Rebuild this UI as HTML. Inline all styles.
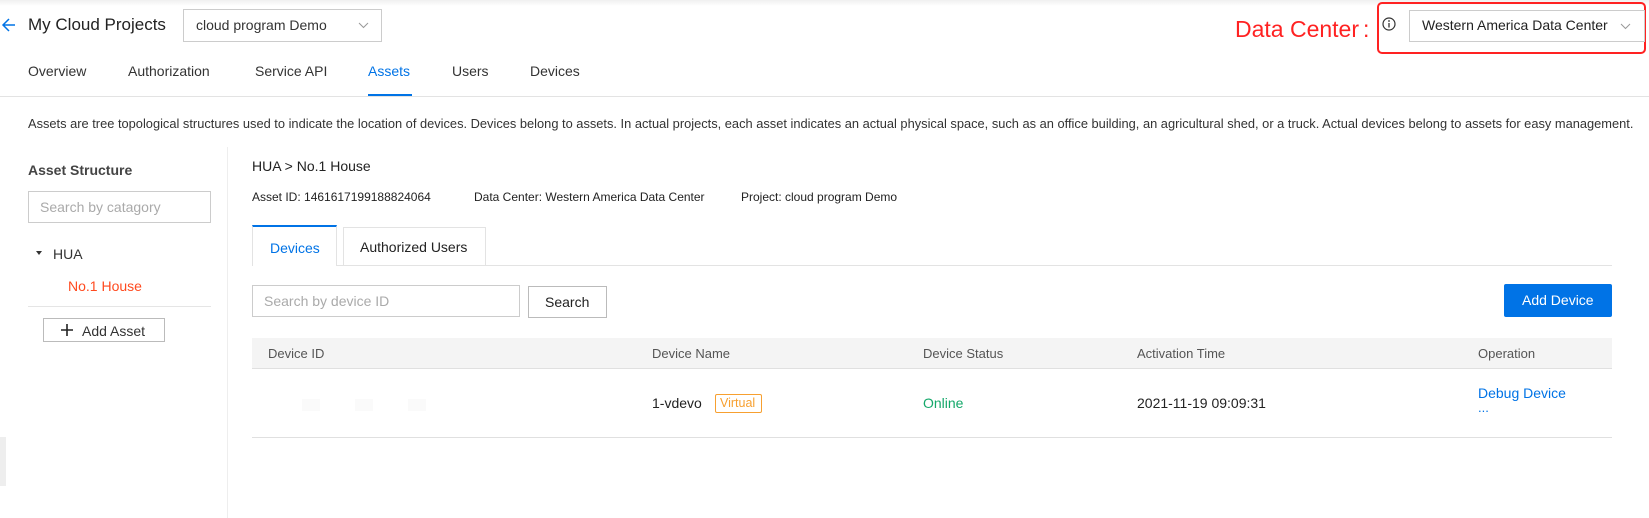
<!DOCTYPE html>
<html><head><meta charset="utf-8"><style>
*{box-sizing:border-box;margin:0;padding:0}
body{width:1649px;height:518px;overflow:hidden;background:#fff;font-family:"Liberation Sans",Arial,sans-serif;color:#333;position:relative}
.a{position:absolute;white-space:nowrap}
.box{position:absolute;border:1px solid #ccc;background:#fff}
.ph{color:#aaa}
.th{font-size:13px;color:#555;position:absolute;top:346px}
</style></head><body>
<div class="a" style="left:0;top:0;width:1649px;height:6px;background:linear-gradient(#f0f0f0,#fff)"></div>
<svg class="a" style="left:1px;top:16px" width="16" height="18" viewBox="0 0 16 18"><path d="M14 9H2M8 3L2 9l6 6" stroke="#0073e6" stroke-width="1.5" fill="none"/></svg>
<div class="a" style="left:28px;top:15px;font-size:17px;color:#222">My Cloud Projects</div>
<div class="box" style="left:183px;top:9px;width:199px;height:33px"><span class="a" style="left:12px;top:7px;font-size:14px">cloud program Demo</span><svg class="a" style="left:174px;top:12px" width="11" height="7"><path d="M1 1l4.5 4.5L10 1" stroke="#999" fill="none"/></svg></div>
<div class="a" style="left:1235px;top:16px;font-size:23px;color:#f22">Data Center<span style="margin-left:4px">:</span></div>
<div class="a" style="left:1377px;top:2px;width:269px;height:52px;border:2px solid #f22;border-radius:5px"></div>
<svg class="a" style="left:1382px;top:17px" width="14" height="14"><circle cx="7" cy="7" r="6" stroke="#333" fill="none" stroke-width="1.2"/><path d="M7 6v4.5" stroke="#333" stroke-width="1.3"/><circle cx="7" cy="4" r="0.9" fill="#333"/></svg>
<div class="box" style="left:1409px;top:10px;width:236px;height:32px"><span class="a" style="left:12px;top:6px;font-size:14px;color:#222">Western America Data Center</span><svg class="a" style="left:210px;top:12px" width="11" height="7"><path d="M1 1l4.5 4.5L10 1" stroke="#999" fill="none"/></svg></div>
<div class="a" style="left:28px;top:63px;font-size:14px">Overview</div>
<div class="a" style="left:128px;top:63px;font-size:14px">Authorization</div>
<div class="a" style="left:255px;top:63px;font-size:14px">Service API</div>
<div class="a" style="left:368px;top:63px;font-size:14px;color:#0073e6">Assets</div>
<div class="a" style="left:452px;top:63px;font-size:14px">Users</div>
<div class="a" style="left:530px;top:63px;font-size:14px">Devices</div>
<div class="a" style="left:0;top:96px;width:1649px;height:1px;background:#e3e3e3"></div>
<div class="a" style="left:368px;top:94px;width:44px;height:2px;background:#0073e6"></div>
<div class="a" style="left:28px;top:116px;font-size:12.85px;color:#333">Assets are tree topological structures used to indicate the location of devices. Devices belong to assets. In actual projects, each asset indicates an actual physical space, such as an office building, an agricultural shed, or a truck. Actual devices belong to assets for easy management.</div>
<div class="a" style="left:227px;top:147px;width:1px;height:371px;background:#eee"></div>
<div class="a" style="left:28px;top:162px;font-size:14px;font-weight:bold;color:#444">Asset Structure</div>
<div class="box" style="left:28px;top:191px;width:183px;height:32px"><span class="a ph" style="left:11px;top:7px;font-size:14px">Search by catagory</span></div>
<div class="a" style="left:36px;top:251px;width:0;height:0;border-left:3.5px solid transparent;border-right:3.5px solid transparent;border-top:4px solid #333"></div>
<div class="a" style="left:53px;top:246px;font-size:14px">HUA</div>
<div class="a" style="left:68px;top:278px;font-size:14px;color:#ff4a1f">No.1 House</div>
<div class="a" style="left:28px;top:306px;width:183px;height:1px;background:#e5e5e5"></div>
<div class="box" style="left:43px;top:318px;width:122px;height:24px;border-color:#bbb"><svg class="a" style="left:17px;top:5px" width="12" height="12"><path d="M6 0v12M0 6h12" stroke="#222" stroke-width="1.6"/></svg><span class="a" style="left:38px;top:4px;font-size:14px">Add Asset</span></div>
<div class="a" style="left:0;top:437px;width:6px;height:49px;background:#eee"></div>
<div class="a" style="left:252px;top:158px;font-size:14px;color:#222">HUA &gt; No.1 House</div>
<div class="a" style="left:252px;top:190px;font-size:12px;color:#222">Asset ID: 1461617199188824064</div>
<div class="a" style="left:474px;top:190px;font-size:12px;color:#222">Data Center: Western America Data Center</div>
<div class="a" style="left:741px;top:190px;font-size:12px;color:#222">Project: cloud program Demo</div>
<div class="a" style="left:252px;top:265px;width:1360px;height:1px;background:#e3e3e3"></div>
<div class="a" style="left:252px;top:225px;width:85px;height:41px;border:1px solid #e3e3e3;border-top:2px solid #0073e6;border-bottom:none;background:#fff"><span class="a" style="left:17px;top:13px;font-size:14px;color:#0073e6">Devices</span></div>
<div class="a" style="left:343px;top:227px;width:143px;height:38px;border:1px solid #e3e3e3;border-bottom:none"><span class="a" style="left:16px;top:11px;font-size:14px;color:#222">Authorized Users</span></div>
<div class="box" style="left:252px;top:285px;width:268px;height:32px"><span class="a ph" style="left:11px;top:7px;font-size:14px">Search by device ID</span></div>
<div class="box" style="left:528px;top:286px;width:79px;height:32px;border-color:#bbb"><span class="a" style="left:16px;top:7px;font-size:14px;color:#222">Search</span></div>
<div class="a" style="left:1504px;top:284px;width:108px;height:33px;background:#0073e6;border-radius:2px"><span class="a" style="left:18px;top:8px;font-size:14px;color:#fff">Add Device</span></div>
<div class="a" style="left:252px;top:338px;width:1360px;height:31px;background:#f4f4f4;border-bottom:1px solid #e0e0e0"></div>
<div class="th" style="left:268px">Device ID</div>
<div class="th" style="left:652px">Device Name</div>
<div class="th" style="left:923px">Device Status</div>
<div class="th" style="left:1137px">Activation Time</div>
<div class="th" style="left:1478px">Operation</div>
<div class="a" style="left:302px;top:399px;width:18px;height:12px;background:#fafafa"></div>
<div class="a" style="left:355px;top:399px;width:18px;height:12px;background:#fafafa"></div>
<div class="a" style="left:408px;top:399px;width:18px;height:12px;background:#fafafa"></div>
<div class="a" style="left:652px;top:395px;font-size:14px;color:#222">1-vdevo</div>
<div class="a" style="left:715px;top:394px;width:47px;height:19px;border:1px solid #f7a030;border-radius:2px;color:#f7a030;font-size:12.5px;padding-left:4px;line-height:17px">Virtual</div>
<div class="a" style="left:923px;top:395px;font-size:14px;color:#14a86a">Online</div>
<div class="a" style="left:1137px;top:395px;font-size:14px;color:#222">2021-11-19 09:09:31</div>
<div class="a" style="left:1478px;top:385px;font-size:14px;color:#0073e6">Debug Device</div>
<div class="a" style="left:1478px;top:400px;font-size:13px;color:#0073e6">...</div>
<div class="a" style="left:252px;top:437px;width:1360px;height:1px;background:#e0e0e0"></div>
</body></html>
